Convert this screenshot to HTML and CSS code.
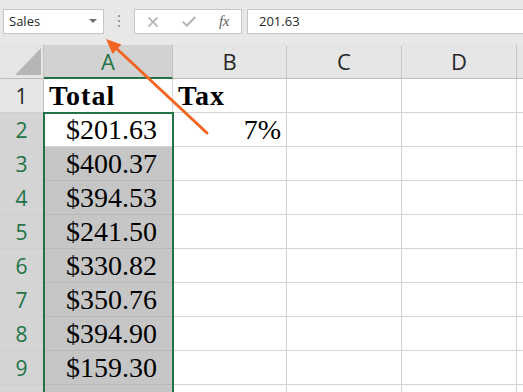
FILE: index.html
```html
<!DOCTYPE html>
<html>
<head>
<meta charset="utf-8">
<link rel="stylesheet" href="styles.css">
</head>
<body>
<div class="app">
  <div class="toolbar">
    <div class="namebox"><span class="nb-text">Sales</span><span class="caret"></span></div>
    <div class="grip"><i></i><i></i><i></i></div>
    <div class="fbtns">
      <svg class="ico-x" width="10" height="10" viewBox="0 0 10 10"><path d="M0.5 0.5 L9.5 9.5 M9.5 0.5 L0.5 9.5" stroke="#b3b3b3" stroke-width="1.6" fill="none"/></svg>
      <svg class="ico-check" width="14" height="11" viewBox="0 0 14 11"><path d="M0.8 5.6 L4.8 9.6 L13.2 1" stroke="#b3b3b3" stroke-width="2" fill="none"/></svg>
      <span class="fx">fx</span>
    </div>
    <div class="fbar">201.63</div>
  </div>
  <div class="sheet">
    <div class="corner"><span class="tri"></span></div>
    <div class="ch ch-sel">A</div>
    <div class="ch">B</div>
    <div class="ch">C</div>
    <div class="ch">D</div>
    <div class="ch ch-last"></div>

    <div class="rh">1</div>
    <div class="c txt b">Total</div>
    <div class="c txt b">Tax</div>
    <div class="c"></div><div class="c"></div><div class="c"></div>

    <div class="rh rh-sel">2</div>
    <div class="c num active">$201.63</div>
    <div class="c pct">7%</div>
    <div class="c"></div><div class="c"></div><div class="c"></div>

    <div class="rh rh-sel">3</div>
    <div class="c num sel">$400.37</div>
    <div class="c"></div><div class="c"></div><div class="c"></div><div class="c"></div>

    <div class="rh rh-sel">4</div>
    <div class="c num sel">$394.53</div>
    <div class="c"></div><div class="c"></div><div class="c"></div><div class="c"></div>

    <div class="rh rh-sel">5</div>
    <div class="c num sel">$241.50</div>
    <div class="c"></div><div class="c"></div><div class="c"></div><div class="c"></div>

    <div class="rh rh-sel">6</div>
    <div class="c num sel">$330.82</div>
    <div class="c"></div><div class="c"></div><div class="c"></div><div class="c"></div>

    <div class="rh rh-sel">7</div>
    <div class="c num sel">$350.76</div>
    <div class="c"></div><div class="c"></div><div class="c"></div><div class="c"></div>

    <div class="rh rh-sel">8</div>
    <div class="c num sel">$394.90</div>
    <div class="c"></div><div class="c"></div><div class="c"></div><div class="c"></div>

    <div class="rh rh-sel">9</div>
    <div class="c num sel">$159.30</div>
    <div class="c"></div><div class="c"></div><div class="c"></div><div class="c"></div>

    <div class="rh rh-sel"></div>
    <div class="c sel"></div>
    <div class="c"></div><div class="c"></div><div class="c"></div><div class="c"></div>

    <div class="selection"></div>
  </div>
  <svg class="arrow" width="523" height="392" viewBox="0 0 523 392">
    <line x1="207" y1="133" x2="116" y2="48" stroke="#f26522" stroke-width="3" stroke-linecap="round"/>
    <polygon points="106,39 112.6,54 121.4,44.6" fill="#f26522"/>
  </svg>
</div>
</body>
</html>
```
FILE: styles.css
```css
html, body {
  margin: 0;
  padding: 0;
  background: #ffffff;
  overflow: hidden;
}
.app {
  position: relative;
  width: 523px;
  height: 392px;
  overflow: hidden;
  font-family: "Open Sans", "Noto Sans", sans-serif;
}
.toolbar {
  height: 45px;
  box-sizing: border-box;
  padding: 9px 0 0 3px;
  display: flex;
  align-items: flex-start;
  background-color: #e8e8e8;
  background-image: radial-gradient(circle, #d8d8d8 0.6px, transparent 0.8px);
  background-size: 8px 8px;
}
.namebox {
  width: 101px;
  height: 25px;
  box-sizing: border-box;
  border: 1px solid #c6c6c6;
  background: #ffffff;
  display: flex;
  align-items: center;
  justify-content: space-between;
  padding: 0 6px 0 5px;
}
.nb-text {
  font-size: 13px;
  color: #262626;
  line-height: 23px;
}
.caret {
  width: 0;
  height: 0;
  border-left: 4px solid transparent;
  border-right: 4px solid transparent;
  border-top: 4px solid #6e6e6e;
  margin-top: -1px;
}
.grip {
  margin-left: 14px;
  margin-top: 6px;
  display: flex;
  flex-direction: column;
  gap: 3px;
}
.grip i {
  display: block;
  width: 2px;
  height: 2px;
  background: #9c9c9c;
}
.fbtns {
  margin-left: 14px;
  width: 108px;
  height: 25px;
  box-sizing: border-box;
  border: 1px solid #c6c6c6;
  background: #ffffff;
  display: flex;
  align-items: center;
  padding-left: 13px;
}
.ico-check {
  margin-left: 24px;
  margin-top: -1px;
}
.fx {
  margin-left: 23px;
  font-family: "Liberation Serif", serif;
  font-style: italic;
  font-size: 15px;
  color: #5e5e5e;
  letter-spacing: -0.5px;
  line-height: 23px;
}
.fbar {
  margin-left: 5px;
  flex: 1;
  margin-right: -10px;
  height: 25px;
  box-sizing: border-box;
  border: 1px solid #c6c6c6;
  background: #ffffff;
  padding-left: 11px;
  font-size: 13px;
  line-height: 23px;
  color: #262626;
}
.sheet {
  position: relative;
  display: grid;
  grid-template-columns: 44px 129px 114px 115px 115px 40px;
  grid-template-rows: 34px repeat(10, 34px);
}
.corner, .ch, .rh {
  background-color: #e6e6e6;
  background-image: radial-gradient(circle, #d8d8d8 0.6px, transparent 0.8px);
  background-size: 8px 8px;
  box-sizing: border-box;
}
.corner {
  border-right: 1px solid #c4c4c4;
  border-bottom: 1px solid #bdbdbd;
  position: relative;
}
.tri {
  position: absolute;
  left: 15px;
  top: 3px;
  width: 0;
  height: 0;
  border-left: 26px solid transparent;
  border-bottom: 27px solid #b6b6b6;
}
.ch {
  border-right: 1px solid #c4c4c4;
  border-bottom: 1px solid #bdbdbd;
  text-align: center;
  font-size: 22px;
  line-height: 32px;
  color: #262626;
}
.ch-sel {
  background-color: #d2d2d2;
  border-bottom: 2px solid #217346;
  color: #217346;
}
.rh {
  border-right: 1px solid #bdbdbd;
  border-bottom: 1px solid #cfcfcf;
  text-align: center;
  font-size: 21px;
  line-height: 32px;
  padding-top: 1px;
  color: #262626;
}
.rh-sel {
  background-color: #d4d4d4;
  color: #217346;
}
.c {
  box-sizing: border-box;
  border-right: 1px solid #d4d4d4;
  border-bottom: 1px solid #d4d4d4;
  background: #ffffff;
  font-family: "Liberation Serif", "Times New Roman", serif;
  font-size: 28px;
  line-height: 33px;
  color: #000000;
  white-space: nowrap;
  overflow: hidden;
}
.txt {
  padding-left: 5px;
}
.b {
  font-weight: bold;
  letter-spacing: 1px;
}
.num {
  text-align: right;
  padding-right: 15px;
}
.pct {
  text-align: right;
  padding-right: 5px;
}
.sel {
  background-color: #c6c6c6;
  background-image: radial-gradient(circle, #bebebe 0.6px, transparent 0.8px);
  background-size: 8px 8px;
  border-bottom-color: #b9b9b9;
  border-right-color: #b9b9b9;
}
.selection {
  position: absolute;
  grid-column: 2 / 3;
  grid-row: 3 / 12;
  top: -1px;
  left: -1px;
  right: -1px;
  bottom: 0;
  border: 2px solid #217346;
  border-bottom: none;
  pointer-events: none;
}
.arrow {
  position: absolute;
  left: 0;
  top: 0;
  pointer-events: none;
}
```
